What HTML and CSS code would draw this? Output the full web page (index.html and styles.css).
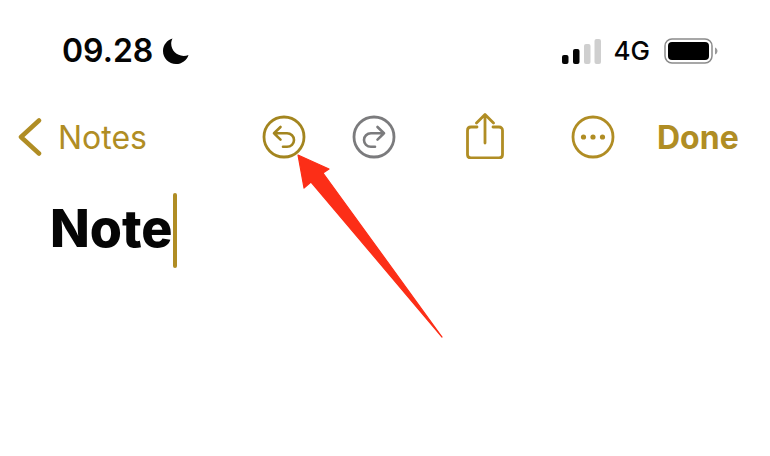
FILE: index.html
```html
<!DOCTYPE html>
<html lang="en">
<head>
  <meta charset="UTF-8">
  <meta name="viewport" content="width=device-width, initial-scale=1.0">
  <title>Notes</title>
  <link rel="stylesheet" href="styles.css">
</head>
<body>

  <div class="status-bar">
    <div class="status-left">
      <span class="time">09.28</span>
      <svg class="moon" width="26" height="26" viewBox="0 0 26 26">
        <path d="M9.500 0.600C4 2.200 0 7.200 0 13c0 7.200 5.800 13 13 13 5.800 0 10.800-3.800 12.500-9.100-1.500 0.700-3.200 1-5 1C13.700 17.900 8.200 12.400 8.200 5.600c0-1.800 0.500-3.500 1.300-5z" fill="#050505"/>
      </svg>
    </div>
    <div class="status-right">
      <svg class="signal" width="39" height="25" viewBox="0 0 39 25">
        <rect x="0" y="16" width="6.500" height="9" rx="2" fill="#050505"/>
        <rect x="11" y="10" width="6.500" height="15" rx="2" fill="#050505"/>
        <rect x="22" y="5" width="6.500" height="20" rx="2" fill="#cfcfcf"/>
        <rect x="32.500" y="0" width="6.500" height="25" rx="2" fill="#cfcfcf"/>
      </svg>
      <span class="network">4G</span>
      <svg class="battery" width="54" height="26" viewBox="0 0 54 26">
        <rect x="1" y="1" width="47" height="24" rx="7" fill="none" stroke="#8a8a8a" stroke-width="1.500"/>
        <rect x="4" y="4" width="41" height="18" rx="4" fill="#000"/>
        <path d="M51 9.500c1.500 0.500 2.500 2 2.500 3.500s-1 3-2.500 3.500z" fill="#9a9a9a"/>
      </svg>
    </div>
  </div>

  <div class="nav-bar">
    <div class="back">
      <svg width="24" height="38" viewBox="0 0 24 38">
        <path d="M21 2.500L3 19l18 16.500" fill="none" stroke="#b08d24" stroke-width="4.500" stroke-linecap="round" stroke-linejoin="round"/>
      </svg>
      <span class="back-label">Notes</span>
    </div>

    <svg class="tool undo" width="44" height="44" viewBox="0 0 44 44">
      <circle cx="22" cy="22" r="20" fill="none" stroke="#a3851f" stroke-width="2.800"/>
      <path d="M18.500 12l-6.500 6.300 6.500 6.300M12 18.300h13c4 0 7 2.900 7 6.700s-3 6.800-7 6.800h-4" fill="none" stroke="#a3851f" stroke-width="2.600" stroke-linecap="round" stroke-linejoin="round"/>
    </svg>

    <svg class="tool redo" width="44" height="44" viewBox="0 0 44 44">
      <circle cx="22" cy="22" r="20" fill="none" stroke="#7b7b7d" stroke-width="2.800"/>
      <path d="M25.500 12l6.500 6.300-6.500 6.300M32 18.300H19c-4 0-7 2.900-7 6.700s3 6.800 7 6.800h4" fill="none" stroke="#7b7b7d" stroke-width="2.600" stroke-linecap="round" stroke-linejoin="round"/>
    </svg>

    <svg class="tool share" width="38" height="46" viewBox="0 0 38 46">
      <path d="M11 14H5c-2.200 0-3.500 1.300-3.500 3.500v24C1.500 43.700 2.800 45 5 45h28c2.200 0 3.500-1.300 3.500-3.500v-24c0-2.200-1.300-3.500-3.500-3.500h-6" fill="none" stroke="#b08d24" stroke-width="2.800" stroke-linecap="round"/>
      <path d="M19 30V2M10.500 10L19 1.500 27.500 10" fill="none" stroke="#b08d24" stroke-width="2.800" stroke-linecap="round" stroke-linejoin="round"/>
    </svg>

    <svg class="tool more" width="44" height="44" viewBox="0 0 44 44">
      <circle cx="22" cy="22" r="20" fill="none" stroke="#b08d24" stroke-width="2.800"/>
      <circle cx="12.500" cy="22" r="2.600" fill="#b08d24"/>
      <circle cx="22" cy="22" r="2.600" fill="#b08d24"/>
      <circle cx="31.500" cy="22" r="2.600" fill="#b08d24"/>
    </svg>

    <span class="done">Done</span>
  </div>

  <div class="note-body">
    <span class="note-title">Note</span><span class="caret"></span>
  </div>

  <!-- annotation drawn on top of the screenshot -->
  <svg class="arrow" width="770" height="456" viewBox="0 0 770 456">
    <path d="M298 155L329 169 323 173 442 337 311 182 304 188z" fill="#fc2e17" stroke="#fc2e17" stroke-width="1.200" stroke-linejoin="round"/>
  </svg>

</body>
</html>
```

FILE: styles.css
```css
body {
  font-family: Inter, "Liberation Sans", sans-serif;
  background-color: #fff;
  margin: 0;
  height: 456px;
  overflow: hidden;
  position: relative;
}

.status-bar {
  display: flex;
  justify-content: space-between;
  align-items: center;
  height: 26px;
  padding: 38px 52px 0 62px;
}

.status-left,
.status-right {
  display: flex;
  align-items: center;
}

.time {
  font-size: 32px;
  font-weight: 600;
  line-height: 26px;
  color: #050505;
}

.moon {
  margin-left: 10px;
}

.network {
  font-size: 26px;
  font-weight: 500;
  line-height: 26px;
  color: #050505;
  margin: 0 14px 0 13px;
}

.nav-bar {
  display: flex;
  align-items: center;
  height: 50px;
  margin-top: 48px;
  padding-left: 18px;
  color: #b08d24;
}

.back {
  display: flex;
  align-items: center;
  width: 244px;
}

.back-label {
  font-size: 32px;
  margin-left: 16px;
}

.tool {
  flex: none;
}

.redo {
  margin-left: 46px;
}

.share {
  margin-left: 70px;
  margin-bottom: 3px;
}

.more {
  margin-left: 67px;
}

.done {
  font-size: 32px;
  font-weight: 700;
  margin-left: 42px;
}

.note-body {
  display: flex;
  align-items: center;
  height: 76px;
  margin-top: 30px;
  padding-left: 50px;
}

.note-title {
  font-size: 52px;
  font-weight: 800;
  margin-bottom: 3px;
  color: #050505;
}

.caret {
  width: 4px;
  height: 75px;
  border-radius: 2px;
  background-color: #b08d24;
}

.arrow {
  position: absolute;
  left: 0;
  top: 0;
}
```
